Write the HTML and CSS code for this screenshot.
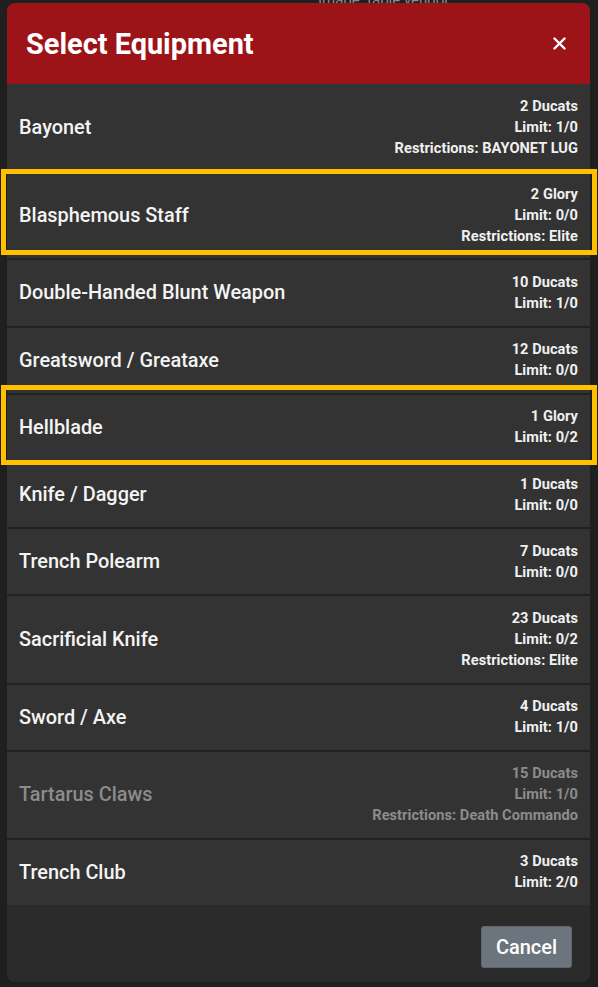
FILE: index.html
```html
<!DOCTYPE html>
<html lang="en">
<head>
<meta charset="utf-8">
<title>Select Equipment</title>
<link rel="stylesheet" href="styles.css">
</head>
<body>
<div class="page">
  <p class="page-text">Image: table vendor</p>
</div>

<div class="modal">
  <div class="modal-header">
    <h1 class="modal-title">Select Equipment</h1>
    <button class="close-btn" aria-label="Close">
      <svg width="13" height="13" viewBox="0 0 13 13"><path d="M1.5 1.5 L11.5 11.5 M11.5 1.5 L1.5 11.5" stroke="#fff" stroke-width="2.4" stroke-linecap="round"/></svg>
    </button>
  </div>
  <div class="modal-body">
    <div class="item">
      <span class="item-name">Bayonet</span>
      <div class="item-meta"><span>2 Ducats</span><span>Limit: 1/0</span><span>Restrictions: BAYONET LUG</span></div>
    </div>
    <div class="item">
      <span class="item-name">Blasphemous Staff</span>
      <div class="item-meta"><span>2 Glory</span><span>Limit: 0/0</span><span>Restrictions: Elite</span></div>
    </div>
    <div class="item">
      <span class="item-name">Double-Handed Blunt Weapon</span>
      <div class="item-meta"><span>10 Ducats</span><span>Limit: 1/0</span></div>
    </div>
    <div class="item">
      <span class="item-name">Greatsword / Greataxe</span>
      <div class="item-meta"><span>12 Ducats</span><span>Limit: 0/0</span></div>
    </div>
    <div class="item">
      <span class="item-name">Hellblade</span>
      <div class="item-meta"><span>1 Glory</span><span>Limit: 0/2</span></div>
    </div>
    <div class="item">
      <span class="item-name">Knife / Dagger</span>
      <div class="item-meta"><span>1 Ducats</span><span>Limit: 0/0</span></div>
    </div>
    <div class="item">
      <span class="item-name">Trench Polearm</span>
      <div class="item-meta"><span>7 Ducats</span><span>Limit: 0/0</span></div>
    </div>
    <div class="item">
      <span class="item-name">Sacrificial Knife</span>
      <div class="item-meta"><span>23 Ducats</span><span>Limit: 0/2</span><span>Restrictions: Elite</span></div>
    </div>
    <div class="item">
      <span class="item-name">Sword / Axe</span>
      <div class="item-meta"><span>4 Ducats</span><span>Limit: 1/0</span></div>
    </div>
    <div class="item item-disabled">
      <span class="item-name">Tartarus Claws</span>
      <div class="item-meta"><span>15 Ducats</span><span>Limit: 1/0</span><span>Restrictions: Death Commando</span></div>
    </div>
    <div class="item">
      <span class="item-name">Trench Club</span>
      <div class="item-meta"><span>3 Ducats</span><span>Limit: 2/0</span></div>
    </div>
  </div>
  <div class="modal-footer">
    <button class="cancel-btn">Cancel</button>
  </div>
</div>

<div class="highlight highlight-staff"></div>
<div class="highlight highlight-hellblade"></div>
</body>
</html>
```

FILE: styles.css
```css
* { box-sizing: border-box; }

html, body {
  margin: 0;
  padding: 0;
  height: 100%;
}

body {
  background: #1f1f1f;
  font-family: Roboto, "Liberation Sans", Arial, sans-serif;
  color: #fff;
  overflow: hidden;
}

.page {
  height: 100%;
  background: #1f1f1f;
}

.page-text {
  margin: 0;
  padding: 0 0 0 318px;
  line-height: 12px;
  font-size: 15px;
  color: #8a8a8a;
  transform: translateY(-6px);
}

.modal {
  position: fixed;
  left: 7px;
  top: 3px;
  width: 583px;
  height: 979px;
  display: flex;
  flex-direction: column;
  background: #2b2b2b;
  border-radius: 8px;
  overflow: hidden;
}

.modal-header {
  height: 81px;
  flex: none;
  background: #9c1418;
  display: flex;
  align-items: center;
  justify-content: space-between;
  padding: 0 24px 0 19px;
}

.modal-title {
  margin: 0;
  font-size: 28.9px;
  font-weight: 700;
  color: #fff;
}

.close-btn {
  background: none;
  border: 0;
  padding: 0;
  width: 13px;
  height: 13px;
  display: flex;
  cursor: pointer;
}

.modal-body {
  display: flex;
  flex-direction: column;
}

.item {
  display: flex;
  align-items: center;
  justify-content: space-between;
  background: #333333;
  padding: 11.6px 12px;
  border-bottom: 2px solid #222222;
}

.item:last-child {
  border-bottom: 0;
}

.item-name {
  font-size: 19.9px;
  font-weight: 500;
  color: #f4f4f4;
}

.item-meta {
  display: flex;
  flex-direction: column;
  align-items: flex-end;
  font-size: 14.6px;
  font-weight: 700;
  line-height: 21px;
  letter-spacing: 0.05px;
  color: #f0f0f0;
}

.item-disabled .item-name,
.item-disabled .item-meta {
  color: #8c8c8c;
}

.modal-footer {
  flex: 1;
  display: flex;
  justify-content: flex-end;
  align-items: flex-start;
  padding: 21px 18px 0 0;
  background: #2b2b2b;
}

.cancel-btn {
  width: 91px;
  height: 42px;
  background: #6c757d;
  border: 1px solid #5f676e;
  border-radius: 3px;
  color: #fff;
  font-family: Roboto, "Liberation Sans", Arial, sans-serif;
  font-size: 20px;
  font-weight: 500;
  padding: 0;
}

.highlight {
  position: absolute;
  left: 1px;
  width: 596px;
  border: 5px solid #ffc000;
  pointer-events: none;
}

.highlight-staff {
  top: 169px;
  height: 86px;
}

.highlight-hellblade {
  top: 385px;
  height: 80px;
}
```
